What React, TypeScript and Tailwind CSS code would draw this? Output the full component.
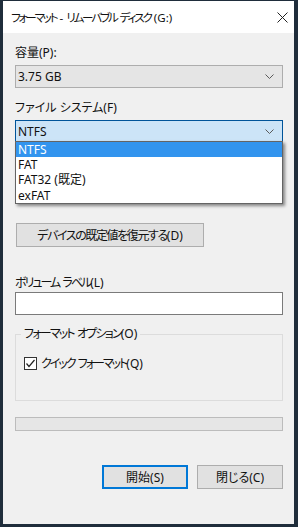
import React from "react";

function Chevron() {
  return (
    <svg width="9" height="5" viewBox="0 0 9 5" className="shrink-0">
      <path d="M0.5 0.5 L4.5 4.5 L8.5 0.5" fill="none" stroke="#5a5a5a" strokeWidth="1" />
    </svg>
  );
}

// Renders Japanese runs with a tighter tracking, leaving Latin text and spaces alone.
function J({ text, tight }: { text: string; tight: string }) {
  const parts = text.split(/([\u3040-\u30ff\u4e00-\u9fff]+)/).filter((p) => p.length > 0);
  return (
    <>
      {parts.map((p, i) =>
        /[\u3040-\u30ff\u4e00-\u9fff]/.test(p) ? (
          <span key={i} className={tight}>
            {p}
          </span>
        ) : (
          <span key={i}>{p}</span>
        )
      )}
    </>
  );
}

export default function App() {
  return (
    <div className="w-[298px] h-[527px] bg-[#f0f0f0] border-t border-l-[3px] border-r-[4px] border-b-[3px] border-[#1f2d3b] flex flex-col text-[12px] leading-[15px] text-[#111] overflow-hidden font-['Noto_Sans','Noto_Sans_CJK_JP',sans-serif] [font-feature-settings:'palt']">
      {/* title bar */}
      <div className="h-[32px] bg-white flex items-center justify-between pl-[8px] pr-[6px] shrink-0">
        <span className="text-[11.5px] text-[#111] whitespace-pre">
          <J text="フォーマット - リムーバブル ディスク (G:)" tight="tracking-[-2.1px]" />
        </span>
        <svg width="11" height="11" viewBox="0 0 11 11">
          <path d="M0.5 0.5 L10.5 10.5 M10.5 0.5 L0.5 10.5" stroke="#222" strokeWidth="1" />
        </svg>
      </div>

      <div className="flex flex-col pl-[12px] pr-[11px]">
        <div className="mt-[12px] h-[15px]">容量(P):</div>
        <div className="mt-[5px] h-[23px] bg-[#e5e5e5] border border-[#adadad] flex items-center justify-between pl-[2px] pr-[8px]">
          <span>3.75 GB</span>
          <Chevron />
        </div>

        <div className="mt-[12px] h-[15px]">ファイル システム(F)</div>
        <div className="relative mt-[5px]">
          <div className="h-[22px] bg-[#cce4f7] border border-[#005499] flex items-center justify-between pl-[2px] pr-[8px]">
            <span>NTFS</span>
            <Chevron />
          </div>
          <div className="absolute left-0 right-0 top-[21px] z-10 bg-white border border-[#646464] shadow-[2px_2px_3px_rgba(0,0,0,0.45)] flex flex-col leading-[14px]">
            <div className="h-[15px] bg-[#3294ee] text-white pl-[2px] flex items-center">NTFS</div>
            <div className="h-[15px] pl-[2px] flex items-center">FAT</div>
            <div className="h-[16px] pl-[2px] flex items-center">FAT32 (既定)</div>
            <div className="h-[15px] pl-[2px] flex items-center">exFAT</div>
          </div>
        </div>

        <div className="mt-[81px] ml-[1px] w-[188px] h-[24px] bg-[#e1e1e1] border border-[#adadad] flex items-center justify-center">
          <span>
            <J text="デバイスの既定値を復元する(D)" tight="tracking-[-1.4px]" />
          </span>
        </div>

        <div className="mt-[28px] h-[15px] whitespace-pre">
          <J text="ボリューム ラベル(L)" tight="tracking-[-2px]" />
        </div>
        <div className="mt-[2px] h-[23px] bg-white border border-[#7a7a7a]" />

        <fieldset className="mt-[11px] h-[75px] border border-[#dcdcdc] pl-[8px]">
          <legend className="-ml-[3px] px-[3px] leading-[16px] whitespace-pre">
            <J text="フォーマット オプション(O)" tight="tracking-[-1.8px]" />
          </legend>
          <div className="mt-[14px] h-[15px] flex items-center gap-[4px]">
            <div className="w-[13px] h-[13px] bg-white border border-[#333] flex items-center justify-center">
              <svg width="11" height="11" viewBox="0 0 11 11">
                <path d="M1.5 5.5 L4 8.5 L9.5 2" fill="none" stroke="#222" strokeWidth="1.2" />
              </svg>
            </div>
            <span className="whitespace-pre">
              <J text="クイック フォーマット(Q)" tight="tracking-[-2px]" />
            </span>
          </div>
        </fieldset>

        <div className="mt-[16px] h-[14px] bg-[#e6e6e6] border border-[#bcbcbc]" />

        <div className="mt-[34px] flex justify-end gap-[9px]">
          <div className="w-[86px] h-[24px] bg-[#e1e1e1] border-2 border-[#0078d7] flex items-center justify-center">
            開始(S)
          </div>
          <div className="w-[86px] h-[24px] bg-[#e1e1e1] border border-[#adadad] flex items-center justify-center">
            閉じる(C)
          </div>
        </div>
      </div>
    </div>
  );
}
